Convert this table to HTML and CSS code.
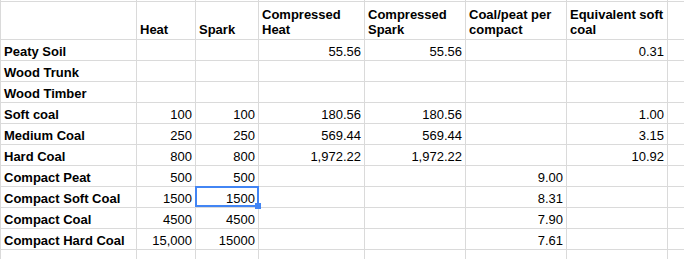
FILE: index.html
```html
<!DOCTYPE html>
<html lang="en">
<head>
<meta charset="utf-8">
<title>Sheet</title>
<link rel="stylesheet" href="styles.css">
</head>
<body>
<div class="sheet">
  <div class="c"></div><div class="c"></div><div class="c"></div><div class="c"></div><div class="c"></div><div class="c"></div><div class="c"></div><div class="c"></div>

  <div class="c h"></div>
  <div class="c h">Heat</div>
  <div class="c h">Spark</div>
  <div class="c h">Compressed<br>Heat</div>
  <div class="c h">Compressed<br>Spark</div>
  <div class="c h">Coal/peat per<br>compact</div>
  <div class="c h">Equivalent soft<br>coal</div>
  <div class="c h"></div>

  <div class="c lbl">Peaty Soil</div>
  <div class="c n"></div><div class="c n"></div>
  <div class="c n">55.56</div><div class="c n">55.56</div>
  <div class="c n"></div><div class="c n">0.31</div><div class="c"></div>

  <div class="c lbl">Wood Trunk</div>
  <div class="c"></div><div class="c"></div><div class="c"></div><div class="c"></div><div class="c"></div><div class="c"></div><div class="c"></div>

  <div class="c lbl">Wood Timber</div>
  <div class="c"></div><div class="c"></div><div class="c"></div><div class="c"></div><div class="c"></div><div class="c"></div><div class="c"></div>

  <div class="c lbl">Soft coal</div>
  <div class="c n">100</div><div class="c n">100</div>
  <div class="c n">180.56</div><div class="c n">180.56</div>
  <div class="c n"></div><div class="c n">1.00</div><div class="c"></div>

  <div class="c lbl">Medium Coal</div>
  <div class="c n">250</div><div class="c n">250</div>
  <div class="c n">569.44</div><div class="c n">569.44</div>
  <div class="c n"></div><div class="c n">3.15</div><div class="c"></div>

  <div class="c lbl">Hard Coal</div>
  <div class="c n">800</div><div class="c n">800</div>
  <div class="c n">1,972.22</div><div class="c n">1,972.22</div>
  <div class="c n"></div><div class="c n">10.92</div><div class="c"></div>

  <div class="c lbl">Compact Peat</div>
  <div class="c n">500</div><div class="c n">500</div>
  <div class="c n"></div><div class="c n"></div>
  <div class="c n">9.00</div><div class="c n"></div><div class="c"></div>

  <div class="c lbl">Compact Soft Coal</div>
  <div class="c n">1500</div><div class="c n sel">1500</div>
  <div class="c n"></div><div class="c n"></div>
  <div class="c n">8.31</div><div class="c n"></div><div class="c"></div>

  <div class="c lbl">Compact Coal</div>
  <div class="c n">4500</div><div class="c n">4500</div>
  <div class="c n"></div><div class="c n"></div>
  <div class="c n">7.90</div><div class="c n"></div><div class="c"></div>

  <div class="c lbl">Compact Hard Coal</div>
  <div class="c n">15,000</div><div class="c n">15000</div>
  <div class="c n"></div><div class="c n"></div>
  <div class="c n">7.61</div><div class="c n"></div><div class="c"></div>

  <div class="c"></div><div class="c"></div><div class="c"></div><div class="c"></div><div class="c"></div><div class="c"></div><div class="c"></div><div class="c"></div>
</div>
</body>
</html>
```

FILE: styles.css
```css
html, body {
  margin: 0;
  padding: 0;
  background: #ffffff;
}

body {
  width: 684px;
  height: 259px;
  overflow: hidden;
  font-family: "Liberation Sans", Arial, sans-serif;
  font-size: 13px;
  color: #000000;
}

.sheet {
  display: grid;
  grid-template-columns: 135px 58px 62px 105px 100px 100px 100px 16px;
  grid-template-rows: 1px 37px repeat(10, 20px) 9px;
  gap: 1px;
  padding-left: 1px;
  background: #dadada;
  width: 684px;
  height: 259px;
  box-sizing: border-box;
}

.c {
  background: #ffffff;
  display: flex;
  align-items: flex-end;
  padding: 0 3px 1px 3px;
  line-height: 15px;
  white-space: nowrap;
  min-width: 0;
}

.sheet > .c:nth-child(-n+8),
.sheet > .c:nth-last-child(-n+8) {
  padding: 0;
}

.h {
  font-weight: bold;
  padding-bottom: 2px;
}

.lbl {
  font-weight: bold;
}

.n {
  justify-content: flex-end;
}

.sel {
  position: relative;
}

.sel::after {
  content: "";
  position: absolute;
  top: -1px;
  left: -1px;
  right: -1px;
  bottom: 0;
  border: 2px solid #4285f4;
  pointer-events: none;
}

.sel::before {
  content: "";
  position: absolute;
  right: -3px;
  bottom: -2px;
  width: 6px;
  height: 6px;
  background: #4285f4;
  z-index: 2;
}
```
